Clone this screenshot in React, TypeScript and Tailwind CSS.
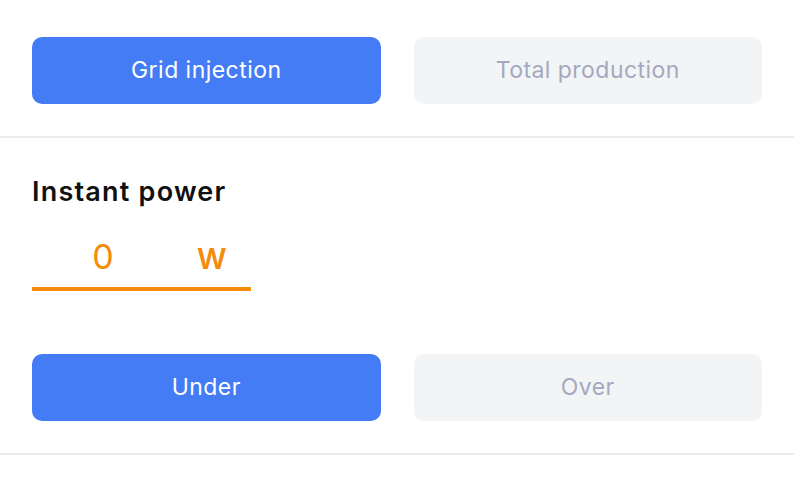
import { useState } from 'react';

export default function App() {
    const [mode, setMode] = useState<'grid' | 'total'>('grid');
    const [side, setSide] = useState<'under' | 'over'>('under');
    const [power, setPower] = useState('0');

    const btn = (active: boolean) =>
        active
            ? 'h-[67px] rounded-[10px] bg-[#447cf6] text-white text-[23px] tracking-[0.02em]'
            : 'h-[67px] rounded-[10px] bg-[#f3f4f6] text-[#a4a9c0] text-[23px] tracking-[0.02em]';

    return (
        <div className="w-[794px] h-[484px] bg-white font-['Inter',sans-serif] overflow-hidden">
            {/* Mode selector */}
            <div className="grid grid-cols-2 gap-[33px] px-8 pt-[37px] pb-8 border-b-2 border-[#ececee]">
                <button onClick={() => setMode('grid')} className={btn(mode === 'grid')}>Grid injection</button>
                <button onClick={() => setMode('total')} className={btn(mode === 'total')}>Total production</button>
            </div>

            {/* Instant power */}
            <div className="px-8 pt-[38px] pb-8 border-b-2 border-[#ececee]">
                <h2 className="text-[27px] font-semibold tracking-[0.045em] text-[#111111] leading-8">Instant power</h2>
                <div className="mt-[28px] w-[219px] flex items-baseline border-b-[4px] border-[#f58a0b] pb-[10px]">
                    <input
                        value={power}
                        onChange={(e) => setPower(e.target.value)}
                        className="w-[142px] text-center text-[34px] leading-[28px] text-[#f58a0b] outline-none bg-transparent"
                    />
                    <span className="ml-[23px] text-[29px] leading-[28px] font-semibold text-[#f58a0b]">W</span>
                </div>

                <div className="grid grid-cols-2 gap-[33px] mt-[63px]">
                    <button onClick={() => setSide('under')} className={btn(side === 'under')}>Under</button>
                    <button onClick={() => setSide('over')} className={btn(side === 'over')}>Over</button>
                </div>
            </div>
        </div>
    );
}
